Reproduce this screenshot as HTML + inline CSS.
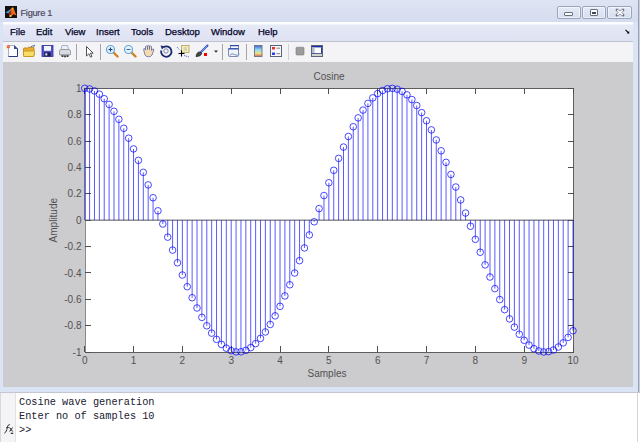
<!DOCTYPE html>
<html><head><meta charset="utf-8"><style>
html,body{margin:0;padding:0;width:640px;height:442px;overflow:hidden;background:#fff;}
*{box-sizing:border-box;}
.abs{position:absolute;}
#frame{left:0;top:0;width:640px;height:393px;background:#dbe4f4;}
#title{left:0;top:0;width:640px;height:22px;background:linear-gradient(#dfe4f3,#d5dcef);}
#menubar{left:3px;top:22px;width:630px;height:20px;background:linear-gradient(#fcfdff 0,#fcfdff 2px,#e6e9f6 3px,#dde1f2 19px);border-bottom:1px solid #bfc3d0;}
#toolbar{left:3px;top:42px;width:630px;height:20px;background:#f4f4f6;}
#fig{left:3px;top:62px;width:630px;height:325px;background:#cccbcd;}
#cmd{left:0;top:393px;width:640px;height:49px;background:#fff;}
.menu{font-family:"Liberation Sans",sans-serif;font-size:9.5px;color:#000028;top:25.5px;-webkit-text-stroke:0.25px #000028;}
.ttl{font-family:"Liberation Sans",sans-serif;font-size:9.2px;color:#4c4c60;left:20.5px;top:7.5px;letter-spacing:-0.25px;-webkit-text-stroke:0.2px #4c4c60;}
.mono{font-family:"Liberation Mono",monospace;font-size:10.27px;color:#202030;left:19px;}
</style></head><body>
<div class="abs" id="frame"></div>
<div class="abs" id="title"></div>
<div class="abs" style="left:5px;top:6px;width:12px;height:12px;background:#101010;"></div>
<svg class="abs" style="left:5px;top:6px" width="12" height="12"><path d="M0.5 6.8L3 4.8L6.5 2.5L5.5 5L3.5 7.5Z" fill="#2a9ad0"/><path d="M4 6.5L7 1.2L8.5 1.5L10 6L11.6 9.6L8.5 8.3L6 10.8L4.2 10.2Z" fill="#e86a1c"/><path d="M4 6.5L6 4.5L6.5 8L4.2 10.2Z" fill="#a02010"/><circle cx="5.5" cy="10" r="1" fill="#f8d030"/><circle cx="7.5" cy="2.8" r="0.8" fill="#f0c040"/></svg>
<div class="abs ttl">Figure 1</div>
<div class="abs" style="left:557px;top:6px;width:24px;height:13px;border:1px solid #98a6bc;border-radius:2px;background:linear-gradient(#e6ebf6,#d6ddee);box-shadow:inset 0 0 0 1px rgba(255,255,255,0.5);"></div>
<div class="abs" style="left:582px;top:6px;width:24px;height:13px;border:1px solid #98a6bc;border-radius:2px;background:linear-gradient(#e6ebf6,#d6ddee);box-shadow:inset 0 0 0 1px rgba(255,255,255,0.5);"></div>
<div class="abs" style="left:607px;top:6px;width:25px;height:13px;border:1px solid #98a6bc;border-radius:2px;background:linear-gradient(#e6ebf6,#d6ddee);box-shadow:inset 0 0 0 1px rgba(255,255,255,0.5);"></div>
<div class="abs" style="left:564px;top:12px;width:9px;height:4px;background:#fbfbfd;border:1px solid #687080;border-radius:1px;"></div>
<div class="abs" style="left:590px;top:9px;width:8px;height:7px;background:#fbfbfd;border:1px solid #687080;border-radius:1px;"></div>
<div class="abs" style="left:592px;top:12px;width:4px;height:2px;background:#404858;"></div>
<svg class="abs" style="left:614px;top:8px" width="12" height="9"><path d="M3 2L9 7M9 2L3 7" stroke="#6a6e80" stroke-width="2.8" stroke-linecap="round"/><path d="M3.2 2.2L8.8 6.8M8.8 2.2L3.2 6.8" stroke="#fff" stroke-width="1.6"/></svg>
<div class="abs" style="left:638px;top:0;width:1px;height:393px;background:#98a0b4;"></div><div class="abs" style="left:639px;top:0;width:1px;height:393px;background:#c8d0e0;"></div>
<div class="abs" id="menubar"></div>
<div class="abs menu" style="left:10px">File</div>
<div class="abs menu" style="left:36px">Edit</div>
<div class="abs menu" style="left:65px">View</div>
<div class="abs menu" style="left:96px">Insert</div>
<div class="abs menu" style="left:131px">Tools</div>
<div class="abs menu" style="left:165px">Desktop</div>
<div class="abs menu" style="left:211px">Window</div>
<div class="abs menu" style="left:258px">Help</div>
<div class="abs" id="toolbar"></div>

<svg class="abs" style="left:0;top:41px" width="340" height="21">
<g transform="translate(0,-41)">
<!-- new doc -->
<path d="M8.5 45.5H14.5L17.5 48.5V56.5H8.5Z" fill="#fdfdff" stroke="#a0b0d8" stroke-width="1"/>
<path d="M17.5 48.5V56.5H8.5" fill="none" stroke="#2a3a80" stroke-width="1"/>
<path d="M14 45L18 49H14Z" fill="#3a4a90"/>
<circle cx="8.3" cy="46.8" r="1.7" fill="#e8602a"/>
<circle cx="8" cy="46.5" r="0.6" fill="#f8c060"/>
<!-- folder -->
<path d="M23.5 49Q23.5 48 24.5 48H27.5L28.5 47.2H33Q34 47.2 34 48.2V55.5Q34 56.5 33 56.5H24.5Q23.5 56.5 23.5 55.5Z" fill="#eab030" stroke="#b88018" stroke-width="0.9"/>
<path d="M23.5 52Q23.5 51 24.5 51H33.8Q34.8 51 34.6 52L34 55.6Q33.8 56.5 32.8 56.5H24.5Q23.5 56.5 23.5 55.5Z" fill="#f8dc68" stroke="#c09020" stroke-width="0.8"/>
<path d="M30.5 47.5Q32 44.8 34.2 46.2" fill="none" stroke="#5070a8" stroke-width="0.9"/>
<path d="M34.8 46.8L33.2 45.2L35 44.8Z" fill="#5070a8"/>
<!-- save -->
<rect x="42" y="45.5" width="11" height="11" fill="#5050c8"/>
<rect x="42" y="45.5" width="11" height="11" fill="none" stroke="#3030a0" stroke-width="0.8"/>
<rect x="44" y="46" width="7" height="4.8" fill="#f4f4ff"/>
<rect x="44.2" y="52.3" width="6.5" height="4.2" fill="#20204a"/>
<rect x="45.3" y="53.3" width="2" height="2.2" fill="#e0e0f0"/>
<!-- print -->
<path d="M62 45.5H67.5L68.5 49.5H61Z" fill="#eef2f8" stroke="#90a0b8" stroke-width="0.8"/>
<path d="M59.5 51Q59.5 49.5 61.5 49.5H68.5Q70.5 49.5 70.5 51V54.8H59.5Z" fill="#d8dce2" stroke="#8a9098" stroke-width="0.8"/>
<path d="M60.5 54.5H69.5L68.8 56.5H61.2Z" fill="#9a9ea4"/>
<circle cx="62.5" cy="56.2" r="0.9" fill="#303030"/><circle cx="65" cy="56.5" r="0.9" fill="#303030"/><circle cx="67.5" cy="56.2" r="0.9" fill="#303030"/>
<!-- separators -->
<rect x="76" y="44" width="1" height="16" fill="#a4a4ae"/>
<rect x="100" y="44" width="1" height="16" fill="#a4a4ae"/>
<rect x="222" y="44" width="1" height="16" fill="#a4a4ae"/>
<rect x="246" y="44" width="1" height="16" fill="#a4a4ae"/>
<rect x="288" y="44" width="1" height="16" fill="#d0d0d8"/>
<!-- pointer -->
<path d="M86.5 46.5V56L88.8 53.8L90.6 57.2L92 56.4L90.4 53.2H93.2Z" fill="#fff" stroke="#404040" stroke-width="0.9" stroke-linejoin="round"/>
<!-- zoom in -->
<path d="M113.5 52.5L117.5 56.5" stroke="#d08020" stroke-width="2.4" stroke-linecap="round"/>
<circle cx="110.5" cy="49.5" r="4" fill="#e6f4fc" stroke="#60a8d8" stroke-width="1.2"/>
<path d="M110.5 47.5V51.5M108.5 49.5H112.5" stroke="#1a3a80" stroke-width="1.1"/>
<!-- zoom out -->
<path d="M131.5 52.5L135.5 56.5" stroke="#d08020" stroke-width="2.4" stroke-linecap="round"/>
<circle cx="128.5" cy="49.5" r="4" fill="#e6f4fc" stroke="#60a8d8" stroke-width="1.2"/>
<path d="M126.5 49.5H130.5" stroke="#3a70b0" stroke-width="1.1"/>
<!-- hand -->
<path d="M144 51Q143 48 144.5 48.5L145.5 50V46.5Q146.5 45.5 147.5 46.5V49.5V45.8Q148.5 44.8 149.5 45.8V49.5V46.5Q150.5 45.5 151.5 46.5V50.5L152.5 49Q154 48.5 153.8 50L152 55Q151 56.8 148.5 56.8Q145.5 56.8 144.8 54.5Z" fill="#f4dcb0" stroke="#5a6aa8" stroke-width="0.8"/>
<!-- rotate -->
<path d="M161.2 50.5A5.2 5.2 0 1 0 163.5 47.2" fill="none" stroke="#1a2a70" stroke-width="1.8"/>
<path d="M160.5 45.5L164.8 46.2L162 49.6Z" fill="#1a2a70"/>
<circle cx="166" cy="51" r="2.2" fill="none" stroke="#6a7aa0" stroke-width="0.9"/>
<!-- data cursor -->
<rect x="181.5" y="45.5" width="7.5" height="7" fill="#f2f0c0" stroke="#b8a860" stroke-width="0.9"/>
<path d="M183.5 48H187M183.5 50H187" stroke="#b0a880" stroke-width="0.8"/>
<path d="M178.5 53.5H184.5M181.5 50.5V56.5" stroke="#000" stroke-width="1.1"/>
<path d="M177 47L180 50.3M184 55.5L189 57" stroke="#4060e0" stroke-width="0.9" stroke-dasharray="1.2 0.8"/>
<!-- brush -->
<path d="M201 52L207.5 45.5" stroke="#3050c8" stroke-width="2" stroke-linecap="round"/>
<path d="M201.3 51.7L207.2 45.8" stroke="#b8c8f0" stroke-width="0.6"/>
<path d="M196 56.5Q196.3 53 199 51.8L201.8 53.2Q201 56.5 196 56.5Z" fill="#484848" stroke="#282828" stroke-width="0.8"/>
<rect x="204" y="53" width="3" height="3" fill="#f00000"/>
<path d="M214 50.5H218L216 52.8Z" fill="#303030"/>
<!-- plot tools -->
<rect x="230.5" y="45.5" width="8" height="6" fill="#f4f6fa" stroke="#7080a8" stroke-width="0.9"/>
<rect x="230" y="45" width="9" height="1.2" fill="#2a48b0"/>
<rect x="228.5" y="48.5" width="10" height="8" rx="1" fill="#f0f4fa" stroke="#7080a8" stroke-width="0.9"/>
<rect x="228.2" y="48.2" width="10.6" height="1.3" fill="#3050b0"/>
<path d="M229.5 55.5Q232 52.5 234.5 54.5T239.5 54" fill="none" stroke="#7890c0" stroke-width="1"/>
<!-- colorbar -->
<defs><linearGradient id="cb" x1="0" y1="0" x2="0" y2="1"><stop offset="0" stop-color="#4a5ad8"/><stop offset="0.4" stop-color="#90e0f0"/><stop offset="0.72" stop-color="#f0e080"/><stop offset="1" stop-color="#c86a60"/></linearGradient></defs>
<rect x="254.5" y="45.5" width="7.5" height="11" fill="url(#cb)" stroke="#6a7088" stroke-width="0.9"/>
<!-- legend -->
<rect x="270.5" y="45.5" width="11" height="11" fill="#f8f8fc" stroke="#5a6478" stroke-width="1"/>
<rect x="272" y="47" width="3" height="2.5" fill="#e83030"/>
<rect x="272" y="52.5" width="3" height="2.5" fill="#3040e0"/>
<path d="M276.5 48.2H280M276.5 53.7H280" stroke="#808080" stroke-width="1"/>
<!-- grey square -->
<rect x="296" y="47.2" width="8" height="7.8" rx="1" fill="#9c9c9c" stroke="#7a7a7a" stroke-width="0.6"/>
<!-- window -->
<rect x="311.5" y="45.5" width="11" height="11" fill="#fdfdff" stroke="#5a6478" stroke-width="1"/>
<rect x="312" y="46" width="10" height="1.4" fill="#1a2aa0"/>
<rect x="312" y="47.4" width="2.6" height="5.8" fill="#b4bccc"/>
<rect x="321" y="47.4" width="1" height="5.8" fill="#2a3a90"/>
<rect x="312" y="53.2" width="10" height="1" fill="#2a3a90"/>
<rect x="312" y="54.2" width="10" height="1.8" fill="#d4d4c8"/>
</g></svg>
<svg class="abs" style="left:622px;top:28px" width="10" height="8"><path d="M3.5 1.8L6 4.3" stroke="#000" stroke-width="1.1"/><path d="M7.3 5.6L4.6 5.4L7.1 2.9Z" fill="#000"/></svg>
<div class="abs" id="fig"></div>
<svg class="abs" style="left:0;top:0" width="640" height="442"><rect x="85" y="88" width="489" height="265" fill="#fff"/><path d="M85.5 88V352.5" stroke="#8a8a8a" stroke-width="1" fill="none" shape-rendering="crispEdges"/><path d="M85 352.5H573.5V88.5H85" stroke="#5e5e5e" stroke-width="1" fill="none" shape-rendering="crispEdges"/><path d="M84.5 352v-6M84.5 88v6M133.5 352v-6M133.5 88v6M182.5 352v-6M182.5 88v6M231.5 352v-6M231.5 88v6M280.5 352v-6M280.5 88v6M328.5 352v-6M328.5 88v6M377.5 352v-6M377.5 88v6M426.5 352v-6M426.5 88v6M475.5 352v-6M475.5 88v6M524.5 352v-6M524.5 88v6M573.5 352v-6M573.5 88v6M85 352.5h6M574 352.5h-6M85 325.5h6M574 325.5h-6M85 299.5h6M574 299.5h-6M85 272.5h6M574 272.5h-6M85 246.5h6M574 246.5h-6M85 220.5h6M574 220.5h-6M85 193.5h6M574 193.5h-6M85 167.5h6M574 167.5h-6M85 141.5h6M574 141.5h-6M85 114.5h6M574 114.5h-6M85 88.5h6M574 88.5h-6" stroke="#505050" stroke-width="1" fill="none" shape-rendering="crispEdges"/><path d="M85 220.15H574" stroke="#555" stroke-width="1"/><path d="M84.70 220.15V88.30M89.58 220.15V88.96M94.47 220.15V90.93M99.35 220.15V94.19M104.23 220.15V98.71M109.12 220.15V104.44M114.00 220.15V111.33M118.88 220.15V119.31M123.76 220.15V128.29M128.65 220.15V138.19M133.53 220.15V148.91M138.41 220.15V160.34M143.30 220.15V172.37M148.18 220.15V184.88M153.06 220.15V197.74M157.94 220.15V210.82M162.83 220.15V224.00M167.71 220.15V237.14M172.59 220.15V250.11M177.48 220.15V262.78M182.36 220.15V275.02M187.24 220.15V286.71M192.13 220.15V297.74M197.01 220.15V308.00M201.89 220.15V317.38M206.78 220.15V325.78M211.66 220.15V333.13M216.54 220.15V339.35M221.42 220.15V344.38M226.31 220.15V348.17M231.19 220.15V350.68M236.07 220.15V351.89M240.96 220.15V351.78M245.84 220.15V350.35M250.72 220.15V347.62M255.61 220.15V343.62M260.49 220.15V338.39M265.37 220.15V331.97M270.25 220.15V324.44M275.14 220.15V315.86M280.02 220.15V306.33M284.90 220.15V295.94M289.79 220.15V284.79M294.67 220.15V273.00M299.55 220.15V260.67M304.44 220.15V247.94M309.32 220.15V234.94M314.20 220.15V221.78M319.08 220.15V208.61M323.97 220.15V195.56M328.85 220.15V182.75M333.73 220.15V170.31M338.62 220.15V158.38M343.50 220.15V147.06M348.38 220.15V136.47M353.26 220.15V126.71M358.15 220.15V117.89M363.03 220.15V110.09M367.91 220.15V103.39M372.80 220.15V97.86M377.68 220.15V93.55M382.56 220.15V90.51M387.45 220.15V88.76M392.33 220.15V88.32M397.21 220.15V89.20M402.10 220.15V91.39M406.98 220.15V94.86M411.86 220.15V99.59M416.74 220.15V105.52M421.63 220.15V112.60M426.51 220.15V120.75M431.39 220.15V129.89M436.28 220.15V139.94M441.16 220.15V150.79M446.04 220.15V162.33M450.93 220.15V174.45M455.81 220.15V187.02M460.69 220.15V199.93M465.57 220.15V213.04M470.46 220.15V226.22M475.34 220.15V239.33M480.22 220.15V252.26M485.11 220.15V264.87M489.99 220.15V277.03M494.87 220.15V288.62M499.75 220.15V299.53M504.64 220.15V309.64M509.52 220.15V318.86M514.40 220.15V327.09M519.29 220.15V334.26M524.17 220.15V340.28M529.05 220.15V345.11M533.94 220.15V348.68M538.82 220.15V350.97M543.70 220.15V351.96M548.59 220.15V351.63M553.47 220.15V349.98M558.35 220.15V347.04M563.23 220.15V342.83M568.12 220.15V337.39M573.00 220.15V330.78" stroke="#0000ff" stroke-opacity="0.72" stroke-width="0.9" fill="none"/><g fill="none" stroke="#0000ff" stroke-width="0.75" stroke-opacity="0.95"><circle cx="84.70" cy="88.30" r="3.3"/><circle cx="89.58" cy="88.96" r="3.3"/><circle cx="94.47" cy="90.93" r="3.3"/><circle cx="99.35" cy="94.19" r="3.3"/><circle cx="104.23" cy="98.71" r="3.3"/><circle cx="109.12" cy="104.44" r="3.3"/><circle cx="114.00" cy="111.33" r="3.3"/><circle cx="118.88" cy="119.31" r="3.3"/><circle cx="123.76" cy="128.29" r="3.3"/><circle cx="128.65" cy="138.19" r="3.3"/><circle cx="133.53" cy="148.91" r="3.3"/><circle cx="138.41" cy="160.34" r="3.3"/><circle cx="143.30" cy="172.37" r="3.3"/><circle cx="148.18" cy="184.88" r="3.3"/><circle cx="153.06" cy="197.74" r="3.3"/><circle cx="157.94" cy="210.82" r="3.3"/><circle cx="162.83" cy="224.00" r="3.3"/><circle cx="167.71" cy="237.14" r="3.3"/><circle cx="172.59" cy="250.11" r="3.3"/><circle cx="177.48" cy="262.78" r="3.3"/><circle cx="182.36" cy="275.02" r="3.3"/><circle cx="187.24" cy="286.71" r="3.3"/><circle cx="192.13" cy="297.74" r="3.3"/><circle cx="197.01" cy="308.00" r="3.3"/><circle cx="201.89" cy="317.38" r="3.3"/><circle cx="206.78" cy="325.78" r="3.3"/><circle cx="211.66" cy="333.13" r="3.3"/><circle cx="216.54" cy="339.35" r="3.3"/><circle cx="221.42" cy="344.38" r="3.3"/><circle cx="226.31" cy="348.17" r="3.3"/><circle cx="231.19" cy="350.68" r="3.3"/><circle cx="236.07" cy="351.89" r="3.3"/><circle cx="240.96" cy="351.78" r="3.3"/><circle cx="245.84" cy="350.35" r="3.3"/><circle cx="250.72" cy="347.62" r="3.3"/><circle cx="255.61" cy="343.62" r="3.3"/><circle cx="260.49" cy="338.39" r="3.3"/><circle cx="265.37" cy="331.97" r="3.3"/><circle cx="270.25" cy="324.44" r="3.3"/><circle cx="275.14" cy="315.86" r="3.3"/><circle cx="280.02" cy="306.33" r="3.3"/><circle cx="284.90" cy="295.94" r="3.3"/><circle cx="289.79" cy="284.79" r="3.3"/><circle cx="294.67" cy="273.00" r="3.3"/><circle cx="299.55" cy="260.67" r="3.3"/><circle cx="304.44" cy="247.94" r="3.3"/><circle cx="309.32" cy="234.94" r="3.3"/><circle cx="314.20" cy="221.78" r="3.3"/><circle cx="319.08" cy="208.61" r="3.3"/><circle cx="323.97" cy="195.56" r="3.3"/><circle cx="328.85" cy="182.75" r="3.3"/><circle cx="333.73" cy="170.31" r="3.3"/><circle cx="338.62" cy="158.38" r="3.3"/><circle cx="343.50" cy="147.06" r="3.3"/><circle cx="348.38" cy="136.47" r="3.3"/><circle cx="353.26" cy="126.71" r="3.3"/><circle cx="358.15" cy="117.89" r="3.3"/><circle cx="363.03" cy="110.09" r="3.3"/><circle cx="367.91" cy="103.39" r="3.3"/><circle cx="372.80" cy="97.86" r="3.3"/><circle cx="377.68" cy="93.55" r="3.3"/><circle cx="382.56" cy="90.51" r="3.3"/><circle cx="387.45" cy="88.76" r="3.3"/><circle cx="392.33" cy="88.32" r="3.3"/><circle cx="397.21" cy="89.20" r="3.3"/><circle cx="402.10" cy="91.39" r="3.3"/><circle cx="406.98" cy="94.86" r="3.3"/><circle cx="411.86" cy="99.59" r="3.3"/><circle cx="416.74" cy="105.52" r="3.3"/><circle cx="421.63" cy="112.60" r="3.3"/><circle cx="426.51" cy="120.75" r="3.3"/><circle cx="431.39" cy="129.89" r="3.3"/><circle cx="436.28" cy="139.94" r="3.3"/><circle cx="441.16" cy="150.79" r="3.3"/><circle cx="446.04" cy="162.33" r="3.3"/><circle cx="450.93" cy="174.45" r="3.3"/><circle cx="455.81" cy="187.02" r="3.3"/><circle cx="460.69" cy="199.93" r="3.3"/><circle cx="465.57" cy="213.04" r="3.3"/><circle cx="470.46" cy="226.22" r="3.3"/><circle cx="475.34" cy="239.33" r="3.3"/><circle cx="480.22" cy="252.26" r="3.3"/><circle cx="485.11" cy="264.87" r="3.3"/><circle cx="489.99" cy="277.03" r="3.3"/><circle cx="494.87" cy="288.62" r="3.3"/><circle cx="499.75" cy="299.53" r="3.3"/><circle cx="504.64" cy="309.64" r="3.3"/><circle cx="509.52" cy="318.86" r="3.3"/><circle cx="514.40" cy="327.09" r="3.3"/><circle cx="519.29" cy="334.26" r="3.3"/><circle cx="524.17" cy="340.28" r="3.3"/><circle cx="529.05" cy="345.11" r="3.3"/><circle cx="533.94" cy="348.68" r="3.3"/><circle cx="538.82" cy="350.97" r="3.3"/><circle cx="543.70" cy="351.96" r="3.3"/><circle cx="548.59" cy="351.63" r="3.3"/><circle cx="553.47" cy="349.98" r="3.3"/><circle cx="558.35" cy="347.04" r="3.3"/><circle cx="563.23" cy="342.83" r="3.3"/><circle cx="568.12" cy="337.39" r="3.3"/><circle cx="573.00" cy="330.78" r="3.3"/></g><g font-family="Liberation Sans" font-size="10" fill="#525252"><text x="84.7" y="364" text-anchor="middle">0</text><text x="133.5" y="364" text-anchor="middle">1</text><text x="182.4" y="364" text-anchor="middle">2</text><text x="231.2" y="364" text-anchor="middle">3</text><text x="280.0" y="364" text-anchor="middle">4</text><text x="328.9" y="364" text-anchor="middle">5</text><text x="377.7" y="364" text-anchor="middle">6</text><text x="426.5" y="364" text-anchor="middle">7</text><text x="475.3" y="364" text-anchor="middle">8</text><text x="524.2" y="364" text-anchor="middle">9</text><text x="573.0" y="364" text-anchor="middle">10</text><text x="81.5" y="355.6" text-anchor="end">-1</text><text x="81.5" y="329.2" text-anchor="end">-0.8</text><text x="81.5" y="302.9" text-anchor="end">-0.6</text><text x="81.5" y="276.5" text-anchor="end">-0.4</text><text x="81.5" y="250.1" text-anchor="end">-0.2</text><text x="81.5" y="223.8" text-anchor="end">0</text><text x="81.5" y="197.4" text-anchor="end">0.2</text><text x="81.5" y="171.0" text-anchor="end">0.4</text><text x="81.5" y="144.6" text-anchor="end">0.6</text><text x="81.5" y="118.3" text-anchor="end">0.8</text><text x="81.5" y="91.9" text-anchor="end">1</text><text x="329" y="79.7" text-anchor="middle">Cosine</text><text x="327" y="377" text-anchor="middle">Samples</text><text transform="translate(56.5 220.2) rotate(-90)" text-anchor="middle">Amplitude</text></g></svg>
<div class="abs" id="cmd"></div><div class="abs" style="left:0;top:392px;width:640px;height:1px;background:#c4c6d2;"></div><div class="abs" style="left:637px;top:393px;width:1px;height:49px;background:#d4d4d8;"></div>
<div class="abs" style="left:0;top:393px;width:16px;height:49px;background:#f4f4f6;border-right:1px solid #e2e2e6;border-left:1px solid #d8d8dc;"></div>
<div class="abs mono" style="top:396px">Cosine wave generation</div>
<div class="abs mono" style="top:410px">Enter no of samples 10</div>
<div class="abs mono" style="top:424px">&gt;&gt;</div>
<svg class="abs" style="left:0;top:418px" width="16" height="24"><path d="M4.3 15.2Q6 14.8 6.8 11.5L7.8 8Q8.3 6.4 9.8 6.6" fill="none" stroke="#303038" stroke-width="1"/><path d="M6 9.6H9" stroke="#303038" stroke-width="0.8"/><path d="M9.6 9.5L12.6 13.5M12.6 9.5L9.6 13.5" stroke="#202028" stroke-width="1"/><path d="M10.8 15.3H13.2" stroke="#202028" stroke-width="1.2"/></svg>
</body></html>
